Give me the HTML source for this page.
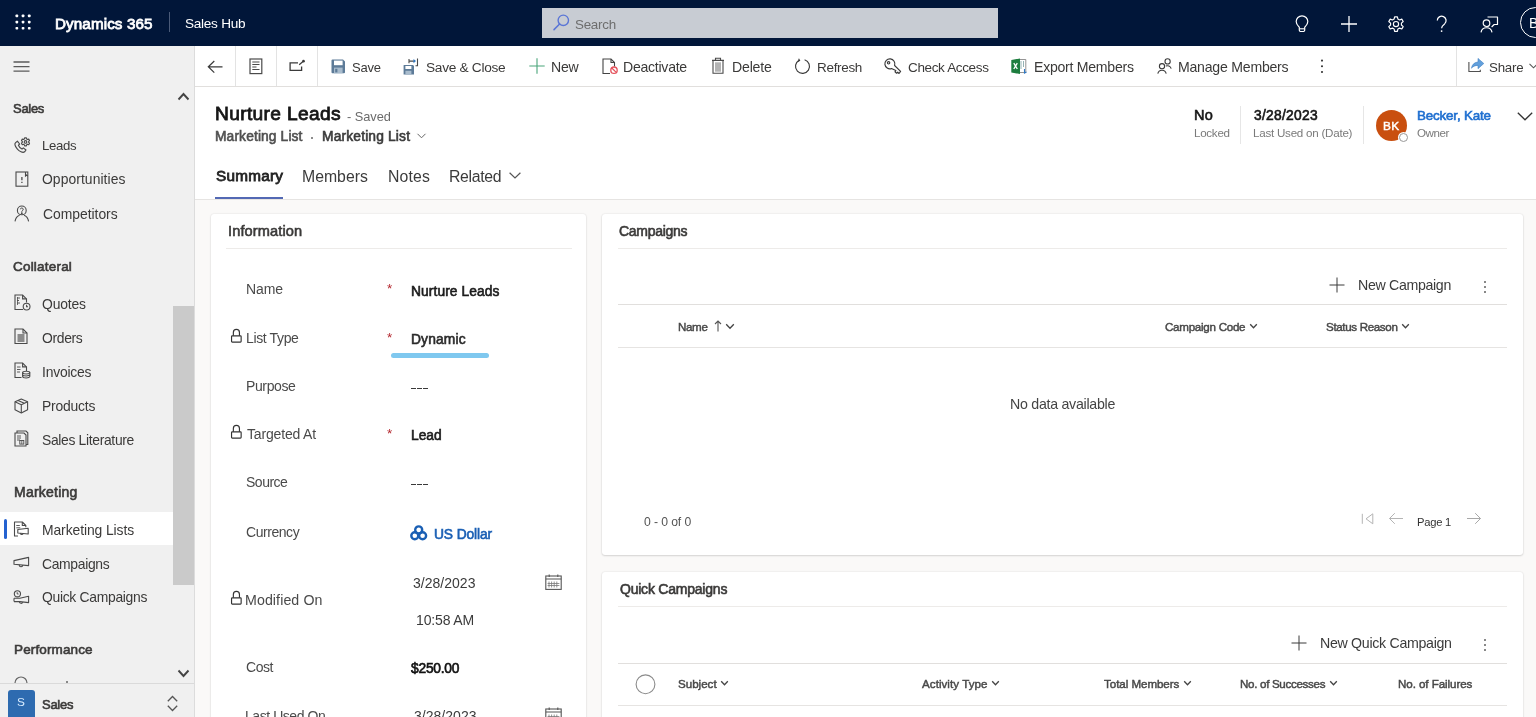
<!DOCTYPE html><html><head><meta charset="utf-8"><style>*{margin:0;padding:0;box-sizing:border-box}
html,body{width:1536px;height:717px;overflow:hidden;background:#faf9f8;font-family:"Liberation Sans",sans-serif}
.t{position:absolute;white-space:nowrap;will-change:transform;font-family:"Liberation Sans",sans-serif}
.a{position:absolute}
svg{position:absolute;overflow:visible}
</style></head><body>
<!-- top bar -->
<div class="a" style="left:0;top:0;width:1536px;height:46px;background:#011639"></div>
<svg style="left:15px;top:14px" width="17" height="17" viewBox="0 0 17 17">
<g fill="#fff"><rect x="0.5" y="0.5" width="2.7" height="2.7" rx="0.8"/><rect x="6.7" y="0.5" width="2.7" height="2.7" rx="0.8"/><rect x="12.9" y="0.5" width="2.7" height="2.7" rx="0.8"/>
<rect x="0.5" y="6.7" width="2.7" height="2.7" rx="0.8"/><rect x="6.7" y="6.7" width="2.7" height="2.7" rx="0.8"/><rect x="12.9" y="6.7" width="2.7" height="2.7" rx="0.8"/>
<rect x="0.5" y="12.9" width="2.7" height="2.7" rx="0.8"/><rect x="6.7" y="12.9" width="2.7" height="2.7" rx="0.8"/><rect x="12.9" y="12.9" width="2.7" height="2.7" rx="0.8"/></g></svg>
<div class="a" style="left:169px;top:12px;width:1px;height:20px;background:#4a5a78"></div>
<div class="a" style="left:542px;top:8px;width:456px;height:30px;background:#c8ccd3"></div>
<svg style="left:553px;top:14px" width="17" height="17" viewBox="0 0 17 17"><circle cx="10.3" cy="6.3" r="5.2" fill="none" stroke="#5a75d6" stroke-width="1.4"/><path d="M6.6 10 L1 15.6" stroke="#5a75d6" stroke-width="1.5" stroke-linecap="round"/></svg>
<!-- right icons -->
<svg style="left:1295px;top:16px" width="14" height="17" viewBox="0 0 14 17"><path d="M4.3 11.2 C3.2 10 1.2 8.6 1.2 5.6 A5.8 5.8 0 0 1 12.8 5.6 C12.8 8.6 10.8 10 9.7 11.2 L9.7 14 A1.5 1.5 0 0 1 8.2 15.5 L5.8 15.5 A1.5 1.5 0 0 1 4.3 14 Z" fill="none" stroke="#fff" stroke-width="1.2"/><path d="M4.5 12.8 H9.5" stroke="#fff" stroke-width="1.1"/></svg>
<svg style="left:1341px;top:16px" width="16" height="16" viewBox="0 0 16 16"><path d="M8 0 V16 M0 8 H16" stroke="#fff" stroke-width="1.3"/></svg>
<svg style="left:1387px;top:15px" width="18" height="18" viewBox="0 0 18 18"><path d="M7.6 1 H10.4 L10.9 3.3 L12.6 4.2 L14.8 3.3 L16.2 5.7 L14.4 7.3 V9.2 L16.2 10.8 L14.8 13.2 L12.6 12.3 L10.9 13.2 L10.4 15.5 H7.6 L7.1 13.2 L5.4 12.3 L3.2 13.2 L1.8 10.8 L3.6 9.2 V7.3 L1.8 5.7 L3.2 3.3 L5.4 4.2 L7.1 3.3 Z" fill="none" stroke="#fff" stroke-width="1.15" stroke-linejoin="round" transform="translate(0,0.8)"/><circle cx="9" cy="9.05" r="2.6" fill="none" stroke="#fff" stroke-width="1.15"/></svg>
<svg style="left:1436px;top:16px" width="12" height="17" viewBox="0 0 12 17"><path d="M1.3 4.6 A4.4 4.4 0 1 1 8.6 7.9 C6.8 9.3 5.6 10.1 5.6 12.2" fill="none" stroke="#fff" stroke-width="1.25"/><circle cx="5.6" cy="15.1" r="0.9" fill="#fff"/></svg>
<svg style="left:1480px;top:15px" width="19" height="18" viewBox="0 0 19 18"><path d="M7.5 2 H17.5 V9.5 H14.2 L11.6 12" fill="none" stroke="#fff" stroke-width="1.2" stroke-linejoin="round"/><circle cx="6.5" cy="8.2" r="3.3" fill="none" stroke="#fff" stroke-width="1.2"/><path d="M1 17.3 A5.6 5.6 0 0 1 12 17.3" fill="none" stroke="#fff" stroke-width="1.2"/></svg>
<div class="a" style="left:1520px;top:7px;width:31px;height:31px;border:1.2px solid #fff;border-radius:50%"></div>
<div class="t" style="left:1529px;top:15.5px;font-size:14px;line-height:14px;font-weight:400;color:#fff">B</div>

<!-- sidebar -->
<div class="a" style="left:0;top:46px;width:195px;height:671px;background:#f0f0f0;border-right:1px solid #dcdcdc"></div>
<svg style="left:13px;top:61px" width="17" height="12" viewBox="0 0 17 12"><path d="M0.5 1 H16.5 M0.5 5.6 H16.5 M0.5 10.2 H16.5" stroke="#5a5a5a" stroke-width="1.3"/></svg>
<svg style="left:177px;top:92px" width="13" height="9" viewBox="0 0 13 9"><path d="M1.5 7.5 L6.5 2 L11.5 7.5" fill="none" stroke="#444" stroke-width="1.9"/></svg>
<svg style="left:177px;top:668.7px" width="13" height="9" viewBox="0 0 13 9"><path d="M1.5 1.5 L6.5 7 L11.5 1.5" fill="none" stroke="#444" stroke-width="1.9"/></svg>
<div class="a" style="left:173px;top:306px;width:21px;height:279px;background:#cacaca"></div>
<div class="a" style="left:0;top:511.6px;width:173px;height:33.2px;background:#ffffff"></div>
<div class="a" style="left:4px;top:519px;width:3px;height:20.2px;background:#2462d0;border-radius:2px"></div>
<div class="a" style="left:0;top:683px;width:194px;height:1px;background:#dadada"></div>
<div class="a" style="left:8px;top:690px;width:27px;height:30px;background:#2e6bb0;border-radius:3px"></div>
<svg style="left:166px;top:695px" width="13" height="17" viewBox="0 0 13 17"><path d="M1.8 6.3 L6.5 1.5 L11.2 6.3 M1.8 10.7 L6.5 15.5 L11.2 10.7" fill="none" stroke="#555" stroke-width="1.3"/></svg>
<!-- sidebar partial icon -->
<svg style="left:14px;top:677px" width="14" height="8" viewBox="0 0 14 8"><path d="M1 6 A6 6 0 0 1 13 6" fill="none" stroke="#666" stroke-width="1.2"/></svg>
<div class="a" style="left:66px;top:681px;width:2px;height:2px;background:#888"></div>

<!-- command bar -->
<div class="a" style="left:195px;top:46px;width:1341px;height:41px;background:#fff;border-bottom:1px solid #e1dfdd"></div>
<div class="a" style="left:235px;top:46px;width:1px;height:40px;background:#e3e3e3"></div>
<div class="a" style="left:276px;top:46px;width:1px;height:40px;background:#e3e3e3"></div>
<div class="a" style="left:317px;top:46px;width:1px;height:40px;background:#e3e3e3"></div>
<div class="a" style="left:1456px;top:46px;width:1px;height:40px;background:#e3e3e3"></div>

<!-- header -->
<div class="a" style="left:195px;top:87px;width:1341px;height:113px;background:#fff;border-bottom:1px solid #e6e4e2"></div>
<div class="a" style="left:215px;top:197px;width:68px;height:2px;background:#5369b4"></div>
<div class="a" style="left:1240px;top:106px;width:1px;height:38px;background:#e6e6e6"></div>
<div class="a" style="left:1363px;top:106px;width:1px;height:38px;background:#e6e6e6"></div>
<div class="a" style="left:1376px;top:109.5px;width:31px;height:31px;background:#c94f0f;border-radius:50%"></div>
<div class="a" style="left:1399px;top:133px;width:9px;height:9px;background:#fff;border:1.2px solid #999;border-radius:50%;box-shadow:0 0 0 1px #fff"></div>
<svg style="left:1517px;top:112px" width="16" height="9" viewBox="0 0 16 9"><path d="M0.8 0.8 L8 7.8 L15.2 0.8" fill="none" stroke="#333" stroke-width="1.3"/></svg>
<svg style="left:417px;top:133px" width="9" height="6" viewBox="0 0 9 6"><path d="M0.5 0.8 L4.5 4.8 L8.5 0.8" fill="none" stroke="#666" stroke-width="1"/></svg>
<div class="a" style="left:311px;top:137px;width:2px;height:2px;background:#666;border-radius:1px"></div>
<svg style="left:509px;top:172px" width="12" height="7" viewBox="0 0 12 7"><path d="M0.6 0.8 L6 6 L11.4 0.8" fill="none" stroke="#555" stroke-width="1.2"/></svg>

<!-- cards -->
<div class="a" style="left:211px;top:214px;width:375px;height:520px;background:#fff;border-radius:3px;box-shadow:0 0 2px rgba(0,0,0,0.12),0 1px 2px rgba(0,0,0,0.10)"></div>
<div class="a" style="left:602px;top:214px;width:921px;height:341px;background:#fff;border-radius:3px;box-shadow:0 0 2px rgba(0,0,0,0.12),0 1px 2px rgba(0,0,0,0.12)"></div>
<div class="a" style="left:602px;top:572px;width:921px;height:200px;background:#fff;border-radius:3px;box-shadow:0 0 2px rgba(0,0,0,0.12),0 1px 2px rgba(0,0,0,0.10)"></div>
<!-- info card lines -->
<div class="a" style="left:226px;top:248px;width:346px;height:1px;background:#edebe9"></div>
<!-- campaigns lines -->
<div class="a" style="left:618px;top:248px;width:889px;height:1px;background:#edebe9"></div>
<div class="a" style="left:618px;top:304px;width:889px;height:1px;background:#e1dfdd"></div>
<div class="a" style="left:618px;top:346.5px;width:889px;height:1px;background:#e6e4e2"></div>
<div class="a" style="left:618px;top:606px;width:889px;height:1px;background:#edebe9"></div>
<div class="a" style="left:618px;top:662.5px;width:889px;height:1px;background:#e1dfdd"></div>
<div class="a" style="left:618px;top:704.5px;width:889px;height:1px;background:#e6e4e2"></div>
<!-- list type underline -->
<div class="a" style="left:390.5px;top:352.8px;width:98px;height:5px;background:#7fc8ef;border-radius:3px"></div>
<!-- asterisks -->
<div class="t" style="left:387.4px;top:281.6px;font-size:13.5px;line-height:13.5px;color:#b3262d">*</div>
<div class="t" style="left:387.4px;top:330.6px;font-size:13.5px;line-height:13.5px;color:#b3262d">*</div>
<div class="t" style="left:387.4px;top:426.6px;font-size:13.5px;line-height:13.5px;color:#b3262d">*</div>
<!-- --- -->
<div class="a" style="left:411.4px;top:387.5px;width:5.1px;height:1.4px;background:#3a3a3a"></div>
<div class="a" style="left:417.2px;top:387.5px;width:5.1px;height:1.4px;background:#3a3a3a"></div>
<div class="a" style="left:423px;top:387.5px;width:5.1px;height:1.4px;background:#3a3a3a"></div>
<div class="a" style="left:411.4px;top:484px;width:5.1px;height:1.4px;background:#3a3a3a"></div>
<div class="a" style="left:417.2px;top:484px;width:5.1px;height:1.4px;background:#3a3a3a"></div>
<div class="a" style="left:423px;top:484px;width:5.1px;height:1.4px;background:#3a3a3a"></div>
<!-- NAV ICONS (stroke #4a4a4a) -->
<!-- leads: phone + gear -->
<svg style="left:13px;top:137px" width="17" height="17" viewBox="0 0 17 17"><g fill="none" stroke="#4a4a4a" stroke-width="1.15" stroke-linejoin="round">
<path d="M2.6 5.6 L4.4 4.2 L6.6 7 L5.4 8.3 C6.1 10 7.3 11.3 9 12.1 L10.3 10.9 L13 13 L11.6 14.8 C9.8 16.3 6.2 14.3 4.2 11.8 C2.3 9.5 1.2 6.9 2.6 5.6 Z"/>
<path d="M11.6 0.9 H13.4 L13.7 2 L14.6 2.5 L15.7 2.1 L16.5 3.6 L15.7 4.4 V5.4 L16.5 6.2 L15.7 7.7 L14.6 7.3 L13.7 7.8 L13.4 8.9 H11.6 L11.3 7.8 L10.4 7.3 L9.3 7.7 L8.5 6.2 L9.3 5.4 V4.4 L8.5 3.6 L9.3 2.1 L10.4 2.5 L11.3 2 Z"/>
<circle cx="12.5" cy="4.9" r="1.3"/></g></svg>
<!-- opportunities -->
<svg style="left:15px;top:171px" width="14" height="16" viewBox="0 0 14 16"><g fill="none" stroke="#4a4a4a" stroke-width="1.1">
<rect x="1" y="1" width="11.8" height="14.2"/><path d="M10.5 1 V5 L11.6 4 L12.8 5"/><path d="M6.9 6 V9.2 M6.9 10.8 V11.9" stroke-width="1.3"/></g></svg>
<!-- competitors -->
<svg style="left:14px;top:205px" width="16" height="17" viewBox="0 0 16 17"><g fill="none" stroke="#4a4a4a" stroke-width="1.1">
<circle cx="7.8" cy="5.4" r="4.4"/><path d="M1 16.4 C1.6 12.8 3.6 10.9 5.6 10.2 M14.6 16.4 C14 12.8 12 10.9 10 10.2"/>
<path d="M6.4 4.3 A1.4 1.4 0 1 1 8.3 5.7 C7.9 6 7.8 6.3 7.8 6.9" stroke-width="1"/><circle cx="7.8" cy="8.2" r="0.4" fill="#4a4a4a"/></g></svg>
<!-- quotes -->
<svg style="left:14px;top:294px" width="17" height="17" viewBox="0 0 17 17"><g fill="none" stroke="#4a4a4a" stroke-width="1.1">
<path d="M9 15.5 H1 V1 H8.6 L12.5 4.9 V8.5"/><path d="M8.6 1 V4.9 H12.5"/><path d="M3 4 H6 M3 6.5 H5 M3 9 H6" stroke-width="0.9"/><path d="M3.5 3 V11" stroke-width="0.8"/>
<circle cx="12.6" cy="12.6" r="3.4"/><path d="M12.6 10.8 V12.8 H14"/></g></svg>
<!-- orders -->
<svg style="left:14px;top:328px" width="15" height="17" viewBox="0 0 15 17"><g fill="none" stroke="#4a4a4a" stroke-width="1.1">
<path d="M1 1 H9 L13 5 V15.5 H1 Z"/><path d="M9 1 V5 H13"/><path d="M3.5 7 H10.5 M3.5 9 H10.5 M3.5 11 H10.5 M3.5 13 H10.5" stroke-width="1.4" stroke="#6a6a6a"/></g></svg>
<!-- invoices -->
<svg style="left:14px;top:362px" width="17" height="17" viewBox="0 0 17 17"><g fill="none" stroke="#4a4a4a" stroke-width="1.1">
<path d="M7.5 15.5 H1 V1 H8.6 L12.5 4.9 V9"/><path d="M8.6 1 V4.9 H12.5"/><path d="M3 5 H6.5 M3 7.5 H6.5 M3 10 H6" stroke-width="0.9"/>
<ellipse cx="12.2" cy="10.6" rx="3.6" ry="1.4"/><path d="M8.6 10.6 V14.6 A3.6 1.4 0 0 0 15.8 14.6 V10.6 M8.6 12.6 A3.6 1.4 0 0 0 15.8 12.6"/></g></svg>
<!-- products -->
<svg style="left:14px;top:398px" width="15" height="16" viewBox="0 0 15 16"><g fill="none" stroke="#4a4a4a" stroke-width="1.1" stroke-linejoin="round">
<path d="M7.3 1 L13.6 3.8 V11.8 L7.3 15 L1 11.8 V3.8 Z"/><path d="M1 3.8 L7.3 6.8 L13.6 3.8 M7.3 6.8 V15 M4 2.4 L10.4 5.3"/></g></svg>
<!-- sales literature -->
<svg style="left:14px;top:430px" width="15" height="17" viewBox="0 0 15 17"><g fill="none" stroke="#4a4a4a" stroke-width="1.1">
<path d="M3 3 V1 H12 L13.8 2.8 V14.5 H12"/><path d="M1 3 H10 L12 5 V16 H1 Z"/><path d="M3 6 H7 M3 8 H7 M3 10 H6" stroke-width="0.9"/><rect x="5.8" y="10.5" width="4" height="3.6" stroke-width="0.9"/><path d="M7.8 10.5 V14" stroke-width="0.8"/></g></svg>
<!-- marketing lists -->
<svg style="left:13px;top:521px" width="17" height="17" viewBox="0 0 17 17"><g fill="none" stroke="#4a4a4a" stroke-width="1.1" stroke-linejoin="round">
<path d="M5 15 H1.5 V1 H9.3 L12.8 4.5 V6.3"/><path d="M9.3 1 V4.5 H12.8"/><path d="M3.3 4.5 H6.8 M3.3 6.8 H7.3" stroke-width="0.9"/>
<path d="M4.8 8.5 L15.2 7.2 V13 L4.8 12 Z"/><path d="M7.2 12.2 A1.6 1.6 0 0 0 10.2 12.6"/></g></svg>
<!-- campaigns megaphone -->
<svg style="left:13px;top:556px" width="17" height="13" viewBox="0 0 17 13"><g fill="none" stroke="#4a4a4a" stroke-width="1.1" stroke-linejoin="round">
<path d="M1 4.6 L15.6 1.4 V9.6 L1 8.2 Z"/><path d="M6.2 8.7 A1.8 1.8 0 0 0 9.8 9.1"/></g></svg>
<!-- quick campaigns -->
<svg style="left:13px;top:590px" width="17" height="14" viewBox="0 0 17 14"><g fill="none" stroke="#4a4a4a" stroke-width="1.1" stroke-linejoin="round">
<circle cx="4.4" cy="3.8" r="3.1"/><path d="M4.2 2.2 V4 H5.6" stroke-width="0.9"/>
<path d="M1 8.2 H6.8 L15.6 6.2 V12.6 L6.8 11.6 H1"/><path d="M1 8.2 V11.6" /><path d="M6.4 11.8 A1.8 1.8 0 0 0 9.8 12.3"/></g></svg>

<!-- COMMAND BAR ICONS -->
<svg style="left:207px;top:60px" width="16" height="14" viewBox="0 0 16 14"><path d="M15.5 6.8 H1.5 M7.3 1 L1.3 6.8 L7.3 12.6" fill="none" stroke="#3b3b3b" stroke-width="1.2"/></svg>
<svg style="left:249px;top:58px" width="14" height="17" viewBox="0 0 14 17"><g fill="none" stroke="#4a4a4a" stroke-width="1.2"><rect x="1" y="1" width="11.8" height="14.6"/><path d="M3.3 4 H10.5 M3.3 6.5 H10.5 M3.3 9 H7.5 M3.3 11.5 H10.5" stroke-width="1"/></g></svg>
<svg style="left:288px;top:58px" width="18" height="14" viewBox="0 0 18 14"><g fill="none" stroke="#3b3b3b" stroke-width="1.3"><path d="M10 4.8 H2.1 V12.4 H13.6 V8.6"/><path d="M11.2 6.8 L15 3.6"/></g><circle cx="15.5" cy="3.2" r="1.35" fill="#3b3b3b"/></svg>
<!-- save floppy -->
<svg style="left:331px;top:59px" width="15" height="15" viewBox="0 0 15 15"><path d="M0.5 1.5 A1 1 0 0 1 1.5 0.5 H12 L14 2.5 V13.3 A1 1 0 0 1 13 14.3 H1.5 A1 1 0 0 1 0.5 13.3 Z" fill="#5d7b98"/><rect x="3" y="1.6" width="8.6" height="4.6" fill="#fff"/><rect x="3" y="8.6" width="8.6" height="5.7" fill="#a9bccd"/><rect x="4.2" y="9.8" width="2.2" height="3.6" fill="#5d7b98"/></svg>
<!-- save & close -->
<svg style="left:403px;top:58px" width="17" height="17" viewBox="0 0 17 17"><path d="M0.6 7 H10 L11 8 V16.5 H0.6 Z" fill="#5d7b98"/><rect x="2.4" y="8" width="6" height="3" fill="#fff"/><rect x="2.4" y="12.8" width="6" height="3.7" fill="#a9bccd"/><path d="M6 1 V5.2 M6 3.1 H12" stroke="#4a4a4a" stroke-width="1.1" fill="none"/><path d="M10.5 1 L13 3.1 L10.5 5.2 Z" fill="#2f78c4"/><path d="M14.5 0.6 V7.8 H12.5" stroke="#4a4a4a" stroke-width="1.1" fill="none"/></svg>
<!-- new plus green -->
<svg style="left:529px;top:58px" width="16" height="16" viewBox="0 0 16 16"><path d="M8 0.3 V15.7 M0.3 8 H15.7" stroke="#4aa57a" stroke-width="1.1"/></svg>
<!-- deactivate -->
<svg style="left:602px;top:58px" width="17" height="17" viewBox="0 0 17 17"><g fill="none" stroke="#444" stroke-width="1.1"><path d="M8 15.5 H1 V1 H9 L12.5 4.5 V8.5"/><path d="M9 1 V4.5 H12.5"/></g><circle cx="12" cy="12.2" r="3.2" fill="none" stroke="#e5515b" stroke-width="1.3"/><path d="M9.8 10 L14.2 14.4" stroke="#e5515b" stroke-width="1.2"/></svg>
<!-- delete -->
<svg style="left:711px;top:57px" width="14" height="18" viewBox="0 0 14 18"><g fill="none" stroke="#4a4a4a" stroke-width="1.1"><path d="M1 3.4 H13 M4.5 3.4 V1.3 H9.5 V3.4"/><path d="M2 3.4 V16.2 H12 V3.4"/></g><rect x="4" y="5.3" width="6" height="9.4" fill="#b3b3b3"/></svg>
<!-- refresh -->
<svg style="left:794px;top:58px" width="17" height="17" viewBox="0 0 17 17"><path d="M5.2 2.2 A7 7 0 1 0 10.6 1.7" fill="none" stroke="#3b3b3b" stroke-width="1.15"/><path d="M4.6 0.8 L5.6 2.6 L3.6 3.6" fill="none" stroke="#3b3b3b" stroke-width="1.1"/></svg>
<!-- check access key -->
<svg style="left:884px;top:58px" width="18" height="17" viewBox="0 0 18 17"><g fill="none" stroke="#3b3b3b" stroke-width="1.15" stroke-linejoin="round"><path d="M7.5 10.6 A5 5 0 1 1 10.6 7.5 L16.6 13.4 L15 15.5 L13.7 14.2 L12.6 15.2 L11 13.8 L11.8 12.6 Z"/><circle cx="4.6" cy="4.8" r="1.2"/></g></svg>
<!-- export members excel -->
<svg style="left:1011px;top:58px" width="17" height="17" viewBox="0 0 17 17"><path d="M7.5 1.5 H14.8 V14.5 H7.5" fill="none" stroke="#888" stroke-width="0.9"/><path d="M10 3 V11 M12.5 3 V9" stroke="#8aa" stroke-width="0.9"/><path d="M0.3 2 L9 0.5 V16 L0.3 14.5 Z" fill="#1d7d3e"/><path d="M2.8 5.2 L6.3 11 M6.3 5.2 L2.8 11" stroke="#fff" stroke-width="1.3"/><path d="M13.5 11 V15 L15.5 14" fill="none" stroke="#2f78c4" stroke-width="1.1"/></svg>
<!-- manage members -->
<svg style="left:1157px;top:58px" width="15" height="16" viewBox="0 0 15 16"><g fill="none" stroke="#3b3b3b" stroke-width="1.1"><circle cx="10.6" cy="3.4" r="2.6"/><path d="M8.8 8 C10.8 7.2 13.4 8 14.2 10.6"/><circle cx="5" cy="8.2" r="2.6"/><path d="M0.8 15.6 A4.3 4.3 0 0 1 9.2 15.6"/></g></svg>
<!-- more vertical -->
<svg style="left:1319.5px;top:59px" width="4" height="15" viewBox="0 0 4 15"><circle cx="2" cy="1.6" r="1.05" fill="#333"/><circle cx="2" cy="7.3" r="1.05" fill="#333"/><circle cx="2" cy="13" r="1.05" fill="#333"/></svg>
<!-- share -->
<svg style="left:1467px;top:57px" width="18" height="16" viewBox="0 0 18 16"><path d="M1.9 4.9 V14.5 H13.3 V12.8" fill="none" stroke="#505050" stroke-width="1.1"/><path d="M4.5 11.2 C5 7.5 7.6 5.2 11 5 V1.4 L16.8 6.5 L11 11.7 V8.4 C8.2 8.4 6 9.3 4.5 11.2 Z" fill="#62a0dc" stroke="#3f7fc2" stroke-width="0.6" stroke-linejoin="round"/></svg>
<svg style="left:1529px;top:63px" width="9" height="6" viewBox="0 0 9 6"><path d="M0.5 0.8 L4.5 4.8 L8.5 0.8" fill="none" stroke="#555" stroke-width="1.1"/></svg>

<!-- INFO CARD ICONS -->
<svg style="left:230px;top:328px" width="13" height="15" viewBox="0 0 13 15"><g fill="none" stroke="#333" stroke-width="1.15"><rect x="1.55" y="7.85" width="9.6" height="6.2" rx="0.7"/><path d="M3.35 7.85 V4.4 A3.05 3.05 0 0 1 9.45 4.4 V7.85"/></g></svg>
<svg style="left:230px;top:424px" width="13" height="15" viewBox="0 0 13 15"><g fill="none" stroke="#333" stroke-width="1.15"><rect x="1.55" y="7.85" width="9.6" height="6.2" rx="0.7"/><path d="M3.35 7.85 V4.4 A3.05 3.05 0 0 1 9.45 4.4 V7.85"/></g></svg>
<svg style="left:230px;top:590px" width="13" height="15" viewBox="0 0 13 15"><g fill="none" stroke="#333" stroke-width="1.15"><rect x="1.55" y="7.85" width="9.6" height="6.2" rx="0.7"/><path d="M3.35 7.85 V4.4 A3.05 3.05 0 0 1 9.45 4.4 V7.85"/></g></svg>
<!-- currency icon -->
<svg style="left:410px;top:525px" width="18" height="16" viewBox="0 0 18 16"><g fill="none" stroke="#1a5fb4" stroke-width="2.4"><circle cx="8.7" cy="4.9" r="3.5"/><circle cx="4.8" cy="10.7" r="3.5"/><circle cx="12.6" cy="10.7" r="3.5"/></g></svg>
<!-- calendar icons -->
<svg style="left:545px;top:574px" width="17" height="16" viewBox="0 0 17 16"><g fill="none" stroke="#555" stroke-width="1.1"><rect x="0.8" y="2" width="15.4" height="13.4"/><path d="M0.8 5 H16.2 M4.2 0.4 V3 M12.8 0.4 V3"/><path d="M4 7.5 V13.5 M6.6 7.5 V13.5 M9.2 7.5 V13.5 M11.8 7.5 V13.5 M2.6 9.5 H14.4 M2.6 11.5 H14.4" stroke-width="0.8" stroke="#777"/></g></svg>
<svg style="left:545px;top:707px" width="17" height="16" viewBox="0 0 17 16"><g fill="none" stroke="#555" stroke-width="1.1"><rect x="0.8" y="2" width="15.4" height="13.4"/><path d="M0.8 5 H16.2 M4.2 0.4 V3 M12.8 0.4 V3"/><path d="M4 7.5 V13.5 M6.6 7.5 V13.5 M9.2 7.5 V13.5 M11.8 7.5 V13.5 M2.6 9.5 H14.4 M2.6 11.5 H14.4" stroke-width="0.8" stroke="#777"/></g></svg>

<!-- CAMPAIGN CARD ICONS -->
<svg style="left:1329px;top:277px" width="16" height="16" viewBox="0 0 16 16"><path d="M8 0.5 V15.5 M0.5 8 H15.5" stroke="#3a3a3a" stroke-width="1"/></svg>
<svg style="left:1483px;top:280px" width="4" height="14" viewBox="0 0 4 14"><circle cx="2" cy="2" r="0.95" fill="#555"/><circle cx="2" cy="7" r="0.95" fill="#555"/><circle cx="2" cy="12" r="0.95" fill="#555"/></svg>
<svg style="left:714px;top:320px" width="8" height="12" viewBox="0 0 8 12"><path d="M4 11.5 V1 M1 4 L4 1 L7 4" fill="none" stroke="#555" stroke-width="1.1"/></svg>
<svg style="left:725px;top:323px" width="10" height="7" viewBox="0 0 10 7"><path d="M1.2 1.3 L5 5.2 L8.8 1.3" fill="none" stroke="#444" stroke-width="1.3"/></svg>
<svg style="left:1249px;top:323px" width="9" height="7" viewBox="0 0 9 7"><path d="M1.2 1.3 L4.5 4.8 L7.8 1.3" fill="none" stroke="#444" stroke-width="1.3"/></svg>
<svg style="left:1401px;top:323px" width="9" height="7" viewBox="0 0 9 7"><path d="M1.2 1.3 L4.5 4.8 L7.8 1.3" fill="none" stroke="#444" stroke-width="1.3"/></svg>
<!-- pager -->
<svg style="left:1361px;top:513px" width="14" height="12" viewBox="0 0 14 12"><path d="M1.3 0.8 V10.8 M11.8 0.8 L5 5.8 L11.8 10.8 Z" fill="none" stroke="#b4b4b4" stroke-width="1"/></svg>
<svg style="left:1388px;top:512px" width="16" height="13" viewBox="0 0 16 13"><path d="M15 6.5 H1.5 M6.8 1.2 L1.5 6.5 L6.8 11.8" fill="none" stroke="#b4b4b4" stroke-width="1"/></svg>
<svg style="left:1466px;top:512px" width="16" height="13" viewBox="0 0 16 13"><path d="M1 6.5 H14.5 M9.2 1.2 L14.5 6.5 L9.2 11.8" fill="none" stroke="#a8a8a8" stroke-width="1"/></svg>

<!-- QUICK CAMPAIGN ICONS -->
<svg style="left:1291px;top:635px" width="16" height="16" viewBox="0 0 16 16"><path d="M8 0.5 V15.5 M0.5 8 H15.5" stroke="#3a3a3a" stroke-width="1"/></svg>
<svg style="left:1483px;top:638px" width="4" height="14" viewBox="0 0 4 14"><circle cx="2" cy="2" r="0.95" fill="#555"/><circle cx="2" cy="7" r="0.95" fill="#555"/><circle cx="2" cy="12" r="0.95" fill="#555"/></svg>
<svg style="left:635px;top:674px" width="21" height="21" viewBox="0 0 21 21"><circle cx="10.5" cy="10.3" r="9.4" fill="none" stroke="#8a8a8a" stroke-width="1.1"/></svg>
<svg style="left:720px;top:680px" width="9" height="7" viewBox="0 0 9 7"><path d="M1.2 1.3 L4.5 4.8 L7.8 1.3" fill="none" stroke="#444" stroke-width="1.3"/></svg>
<svg style="left:991px;top:680px" width="9" height="7" viewBox="0 0 9 7"><path d="M1.2 1.3 L4.5 4.8 L7.8 1.3" fill="none" stroke="#444" stroke-width="1.3"/></svg>
<svg style="left:1183px;top:680px" width="9" height="7" viewBox="0 0 9 7"><path d="M1.2 1.3 L4.5 4.8 L7.8 1.3" fill="none" stroke="#444" stroke-width="1.3"/></svg>
<svg style="left:1329px;top:680px" width="9" height="7" viewBox="0 0 9 7"><path d="M1.2 1.3 L4.5 4.8 L7.8 1.3" fill="none" stroke="#444" stroke-width="1.3"/></svg>

<div class="t" id="dyn" style="left:55.06px;top:15.63px;font-size:15.20px;line-height:15.20px;letter-spacing:0.111px;font-weight:400;-webkit-text-stroke:0.8px #ffffff;color:#ffffff;">Dynamics 365</div>
<div class="t" id="hub" style="left:185.11px;top:17.29px;font-size:13.60px;line-height:13.60px;letter-spacing:-0.276px;font-weight:400;color:#ffffff;">Sales Hub</div>
<div class="t" id="srch" style="left:575.37px;top:17.86px;font-size:13.40px;line-height:13.40px;letter-spacing:-0.261px;font-weight:400;color:#6e6e6e;">Search</div>
<div class="t" id="c_save" style="left:352.09px;top:61.20px;font-size:13.00px;line-height:13.00px;letter-spacing:-0.241px;font-weight:400;color:#3b3a39;">Save</div>
<div class="t" id="c_sc" style="left:426.11px;top:60.60px;font-size:13.70px;line-height:13.70px;letter-spacing:-0.300px;font-weight:400;color:#3b3a39;">Save &amp; Close</div>
<div class="t" id="c_new" style="left:550.52px;top:60.26px;font-size:14.10px;line-height:14.10px;letter-spacing:-0.275px;font-weight:400;color:#3b3a39;">New</div>
<div class="t" id="c_deact" style="left:623.34px;top:60.26px;font-size:14.10px;line-height:14.10px;letter-spacing:-0.265px;font-weight:400;color:#3b3a39;">Deactivate</div>
<div class="t" id="c_del" style="left:732.34px;top:60.26px;font-size:14.10px;line-height:14.10px;letter-spacing:-0.193px;font-weight:400;color:#3b3a39;">Delete</div>
<div class="t" id="c_ref" style="left:817.13px;top:60.77px;font-size:13.50px;line-height:13.50px;letter-spacing:-0.315px;font-weight:400;color:#3b3a39;">Refresh</div>
<div class="t" id="c_chk" style="left:907.73px;top:60.77px;font-size:13.50px;line-height:13.50px;letter-spacing:-0.355px;font-weight:400;color:#3b3a39;">Check Access</div>
<div class="t" id="c_exp" style="left:1033.57px;top:60.26px;font-size:14.10px;line-height:14.10px;letter-spacing:-0.264px;font-weight:400;color:#3b3a39;">Export Members</div>
<div class="t" id="c_man" style="left:1178.33px;top:60.26px;font-size:14.10px;line-height:14.10px;letter-spacing:-0.227px;font-weight:400;color:#3b3a39;">Manage Members</div>
<div class="t" id="c_share" style="left:1488.59px;top:60.94px;font-size:13.30px;line-height:13.30px;letter-spacing:-0.211px;font-weight:400;color:#3b3a39;">Share</div>
<div class="t" id="h_title" style="left:214.51px;top:104.35px;font-size:19.20px;line-height:19.20px;letter-spacing:0.329px;font-weight:400;-webkit-text-stroke:0.8px #161616;color:#161616;">Nurture Leads</div>
<div class="t" id="h_saved" style="left:346.94px;top:110.86px;font-size:12.80px;line-height:12.80px;letter-spacing:-0.030px;font-weight:400;color:#6b6b6b;">- Saved</div>
<div class="t" id="h_ml1" style="left:215.03px;top:130.22px;font-size:13.80px;line-height:13.80px;letter-spacing:0.119px;font-weight:400;-webkit-text-stroke:0.6px #505050;color:#505050;">Marketing List</div>
<div class="t" id="h_ml2" style="left:321.89px;top:130.22px;font-size:13.80px;line-height:13.80px;letter-spacing:0.162px;font-weight:400;-webkit-text-stroke:0.6px #3b3b3b;color:#3b3b3b;">Marketing List</div>
<div class="t" id="h_no" style="left:1193.64px;top:107.73px;font-size:14.50px;line-height:14.50px;letter-spacing:0.157px;font-weight:400;-webkit-text-stroke:0.6px #161616;color:#161616;">No</div>
<div class="t" id="h_locked" style="left:1193.62px;top:127.38px;font-size:11.60px;line-height:11.60px;letter-spacing:-0.275px;font-weight:400;color:#7a7a7a;">Locked</div>
<div class="t" id="h_date" style="left:1253.92px;top:108.82px;font-size:13.80px;line-height:13.80px;letter-spacing:0.275px;font-weight:400;-webkit-text-stroke:0.6px #161616;color:#161616;">3/28/2023</div>
<div class="t" id="h_lu" style="left:1252.57px;top:127.38px;font-size:11.60px;line-height:11.60px;letter-spacing:-0.238px;font-weight:400;color:#7a7a7a;">Last Used on (Date)</div>
<div class="t" id="h_bk" style="left:1382.66px;top:121.01px;font-size:11.80px;line-height:11.80px;letter-spacing:0.478px;font-weight:400;-webkit-text-stroke:0.45px #ffffff;color:#ffffff;">BK</div>
<div class="t" id="h_becker" style="left:1417.00px;top:108.66px;font-size:13.40px;line-height:13.40px;letter-spacing:-0.175px;font-weight:400;-webkit-text-stroke:0.6px #1f6fd0;color:#1f6fd0;">Becker, Kate</div>
<div class="t" id="h_owner" style="left:1417.12px;top:127.38px;font-size:11.60px;line-height:11.60px;letter-spacing:-0.425px;font-weight:400;color:#7a7a7a;">Owner</div>
<div class="t" id="t_sum" style="left:215.53px;top:168.05px;font-size:15.30px;line-height:15.30px;letter-spacing:0.258px;font-weight:400;-webkit-text-stroke:0.8px #242424;color:#242424;">Summary</div>
<div class="t" id="t_mem" style="left:301.89px;top:169.03px;font-size:15.80px;line-height:15.80px;letter-spacing:0.001px;font-weight:400;color:#3b3b3b;">Members</div>
<div class="t" id="t_notes" style="left:387.89px;top:169.03px;font-size:15.80px;line-height:15.80px;letter-spacing:0.141px;font-weight:400;color:#3b3b3b;">Notes</div>
<div class="t" id="t_rel" style="left:448.89px;top:169.03px;font-size:15.80px;line-height:15.80px;letter-spacing:-0.316px;font-weight:400;color:#3b3b3b;">Related</div>
<div class="t" id="n_sales" style="left:13.48px;top:101.70px;font-size:13.00px;line-height:13.00px;letter-spacing:-0.290px;font-weight:400;-webkit-text-stroke:0.6px #3b3a39;color:#3b3a39;">Sales</div>
<div class="t" id="n_leads" style="left:42.24px;top:139.13px;font-size:13.20px;line-height:13.20px;letter-spacing:-0.309px;font-weight:400;color:#3b3a39;">Leads</div>
<div class="t" id="n_opp" style="left:42.33px;top:172.83px;font-size:13.90px;line-height:13.90px;letter-spacing:0.066px;font-weight:400;color:#3b3a39;">Opportunities</div>
<div class="t" id="n_comp" style="left:42.52px;top:207.83px;font-size:13.90px;line-height:13.90px;letter-spacing:-0.024px;font-weight:400;color:#3b3a39;">Competitors</div>
<div class="t" id="n_coll" style="left:13.38px;top:259.97px;font-size:13.50px;line-height:13.50px;letter-spacing:0.202px;font-weight:400;-webkit-text-stroke:0.6px #3b3a39;color:#3b3a39;">Collateral</div>
<div class="t" id="n_quotes" style="left:42.16px;top:297.63px;font-size:13.90px;line-height:13.90px;letter-spacing:-0.161px;font-weight:400;color:#3b3a39;">Quotes</div>
<div class="t" id="n_orders" style="left:42.12px;top:332.23px;font-size:13.90px;line-height:13.90px;letter-spacing:-0.327px;font-weight:400;color:#3b3a39;">Orders</div>
<div class="t" id="n_inv" style="left:41.98px;top:365.63px;font-size:13.90px;line-height:13.90px;letter-spacing:-0.204px;font-weight:400;color:#3b3a39;">Invoices</div>
<div class="t" id="n_prod" style="left:41.91px;top:399.53px;font-size:13.90px;line-height:13.90px;letter-spacing:-0.190px;font-weight:400;color:#3b3a39;">Products</div>
<div class="t" id="n_lit" style="left:42.07px;top:433.53px;font-size:13.90px;line-height:13.90px;letter-spacing:-0.332px;font-weight:400;color:#3b3a39;">Sales Literature</div>
<div class="t" id="n_mkt" style="left:13.90px;top:484.95px;font-size:14.00px;line-height:14.00px;letter-spacing:0.224px;font-weight:400;-webkit-text-stroke:0.6px #3b3a39;color:#3b3a39;">Marketing</div>
<div class="t" id="n_ml" style="left:41.91px;top:524.03px;font-size:13.90px;line-height:13.90px;letter-spacing:-0.090px;font-weight:400;color:#3b3a39;">Marketing Lists</div>
<div class="t" id="n_camp" style="left:42.35px;top:558.23px;font-size:13.90px;line-height:13.90px;letter-spacing:-0.322px;font-weight:400;color:#3b3a39;">Campaigns</div>
<div class="t" id="n_qc" style="left:42.16px;top:591.13px;font-size:13.90px;line-height:13.90px;letter-spacing:-0.301px;font-weight:400;color:#3b3a39;">Quick Campaigns</div>
<div class="t" id="n_perf" style="left:13.75px;top:642.77px;font-size:13.50px;line-height:13.50px;letter-spacing:0.133px;font-weight:400;-webkit-text-stroke:0.6px #3b3a39;color:#3b3a39;">Performance</div>
<div class="t" id="n_bsales" style="left:41.56px;top:698.20px;font-size:13.00px;line-height:13.00px;letter-spacing:-0.274px;font-weight:400;-webkit-text-stroke:0.6px #3b3a39;color:#3b3a39;">Sales</div>
<div class="t" id="n_s" style="left:16.96px;top:697.21px;font-size:11.80px;line-height:11.80px;letter-spacing:0.000px;font-weight:400;color:#d8ecff;">S</div>
<div class="t" id="i_info" style="left:227.58px;top:223.94px;font-size:14.60px;line-height:14.60px;letter-spacing:0.114px;font-weight:400;-webkit-text-stroke:0.6px #3b3a39;color:#3b3a39;">Information</div>
<div class="t" id="i_name" style="left:245.91px;top:281.95px;font-size:14.00px;line-height:14.00px;letter-spacing:-0.103px;font-weight:400;color:#4a4a4a;">Name</div>
<div class="t" id="i_namev" style="left:411.04px;top:284.92px;font-size:13.80px;line-height:13.80px;letter-spacing:0.088px;font-weight:400;-webkit-text-stroke:0.6px #1b1b1b;color:#1b1b1b;">Nurture Leads</div>
<div class="t" id="i_lt" style="left:245.91px;top:330.75px;font-size:14.00px;line-height:14.00px;letter-spacing:-0.362px;font-weight:400;color:#4a4a4a;">List Type</div>
<div class="t" id="i_ltv" style="left:411.21px;top:332.52px;font-size:13.80px;line-height:13.80px;letter-spacing:0.152px;font-weight:400;-webkit-text-stroke:0.6px #2b2b2b;color:#2b2b2b;">Dynamic</div>
<div class="t" id="i_purp" style="left:245.91px;top:379.25px;font-size:14.00px;line-height:14.00px;letter-spacing:-0.379px;font-weight:400;color:#4a4a4a;">Purpose</div>
<div class="t" id="i_ta" style="left:246.71px;top:426.55px;font-size:14.00px;line-height:14.00px;letter-spacing:-0.166px;font-weight:400;color:#4a4a4a;">Targeted At</div>
<div class="t" id="i_tav" style="left:411.36px;top:428.72px;font-size:13.80px;line-height:13.80px;letter-spacing:-0.016px;font-weight:400;-webkit-text-stroke:0.6px #1b1b1b;color:#1b1b1b;">Lead</div>
<div class="t" id="i_src" style="left:246.21px;top:474.55px;font-size:14.00px;line-height:14.00px;letter-spacing:-0.491px;font-weight:400;color:#4a4a4a;">Source</div>
<div class="t" id="i_cur" style="left:246.48px;top:525.25px;font-size:14.00px;line-height:14.00px;letter-spacing:-0.446px;font-weight:400;color:#4a4a4a;">Currency</div>
<div class="t" id="i_curv" style="left:433.55px;top:527.52px;font-size:13.80px;line-height:13.80px;letter-spacing:-0.114px;font-weight:400;-webkit-text-stroke:0.6px #1a5fb4;color:#1a5fb4;">US Dollar</div>
<div class="t" id="i_d1" style="left:413.44px;top:575.55px;font-size:14.00px;line-height:14.00px;letter-spacing:0.023px;font-weight:400;color:#3b3b3b;">3/28/2023</div>
<div class="t" id="i_t1" style="left:415.50px;top:612.75px;font-size:14.00px;line-height:14.00px;letter-spacing:-0.152px;font-weight:400;color:#3b3b3b;">10:58 AM</div>
<div class="t" id="i_mod" style="left:245.45px;top:593.38px;font-size:14.20px;line-height:14.20px;letter-spacing:0.090px;font-weight:400;color:#4a4a4a;">Modified On</div>
<div class="t" id="i_cost" style="left:246.48px;top:659.55px;font-size:14.00px;line-height:14.00px;letter-spacing:-0.481px;font-weight:400;color:#4a4a4a;">Cost</div>
<div class="t" id="i_costv" style="left:411.23px;top:661.62px;font-size:13.80px;line-height:13.80px;letter-spacing:-0.233px;font-weight:400;-webkit-text-stroke:0.6px #111111;color:#111111;">$250.00</div>
<div class="t" id="i_luo" style="left:245.49px;top:709.15px;font-size:14.00px;line-height:14.00px;letter-spacing:-0.443px;font-weight:400;color:#4a4a4a;">Last Used On</div>
<div class="t" id="i_d2" style="left:413.80px;top:709.15px;font-size:14.00px;line-height:14.00px;letter-spacing:0.025px;font-weight:400;color:#3b3b3b;">3/28/2023</div>
<div class="t" id="cp_title" style="left:619.39px;top:224.45px;font-size:14.00px;line-height:14.00px;letter-spacing:-0.285px;font-weight:400;-webkit-text-stroke:0.6px #3b3a39;color:#3b3a39;">Campaigns</div>
<div class="t" id="cp_new" style="left:1358.45px;top:278.48px;font-size:14.20px;line-height:14.20px;letter-spacing:-0.334px;font-weight:400;color:#3b3b3b;">New Campaign</div>
<div class="t" id="cp_name" style="left:677.71px;top:321.18px;font-size:11.60px;line-height:11.60px;letter-spacing:-0.358px;font-weight:400;-webkit-text-stroke:0.45px #484848;color:#484848;">Name</div>
<div class="t" id="cp_code" style="left:1164.58px;top:321.48px;font-size:11.60px;line-height:11.60px;letter-spacing:-0.270px;font-weight:400;-webkit-text-stroke:0.45px #484848;color:#484848;">Campaign Code</div>
<div class="t" id="cp_status" style="left:1325.80px;top:321.48px;font-size:11.60px;line-height:11.60px;letter-spacing:-0.349px;font-weight:400;-webkit-text-stroke:0.45px #484848;color:#484848;">Status Reason</div>
<div class="t" id="cp_nodata" style="left:1009.76px;top:396.98px;font-size:14.20px;line-height:14.20px;letter-spacing:-0.267px;font-weight:400;color:#444444;">No data available</div>
<div class="t" id="cp_count" style="left:644.41px;top:515.77px;font-size:12.20px;line-height:12.20px;letter-spacing:-0.102px;font-weight:400;color:#555555;">0 - 0 of 0</div>
<div class="t" id="cp_page" style="left:1416.66px;top:516.92px;font-size:11.20px;line-height:11.20px;letter-spacing:-0.246px;font-weight:400;color:#333333;">Page 1</div>
<div class="t" id="qc_title" style="left:619.89px;top:582.25px;font-size:14.00px;line-height:14.00px;letter-spacing:-0.222px;font-weight:400;-webkit-text-stroke:0.6px #3b3a39;color:#3b3a39;">Quick Campaigns</div>
<div class="t" id="qc_new" style="left:1320.45px;top:636.48px;font-size:14.20px;line-height:14.20px;letter-spacing:-0.308px;font-weight:400;color:#3b3b3b;">New Quick Campaign</div>
<div class="t" id="qc_subj" style="left:677.85px;top:678.18px;font-size:11.60px;line-height:11.60px;letter-spacing:-0.010px;font-weight:400;-webkit-text-stroke:0.45px #484848;color:#484848;">Subject</div>
<div class="t" id="qc_act" style="left:922.02px;top:678.18px;font-size:11.60px;line-height:11.60px;letter-spacing:0.048px;font-weight:400;-webkit-text-stroke:0.45px #484848;color:#484848;">Activity Type</div>
<div class="t" id="qc_tot" style="left:1104.02px;top:678.18px;font-size:11.60px;line-height:11.60px;letter-spacing:-0.055px;font-weight:400;-webkit-text-stroke:0.45px #484848;color:#484848;">Total Members</div>
<div class="t" id="qc_succ" style="left:1240.35px;top:678.18px;font-size:11.60px;line-height:11.60px;letter-spacing:-0.315px;font-weight:400;-webkit-text-stroke:0.45px #484848;color:#484848;">No. of Successes</div>
<div class="t" id="qc_fail" style="left:1397.67px;top:678.18px;font-size:11.60px;line-height:11.60px;letter-spacing:-0.075px;font-weight:400;-webkit-text-stroke:0.45px #484848;color:#484848;">No. of Failures</div>
</body></html>
